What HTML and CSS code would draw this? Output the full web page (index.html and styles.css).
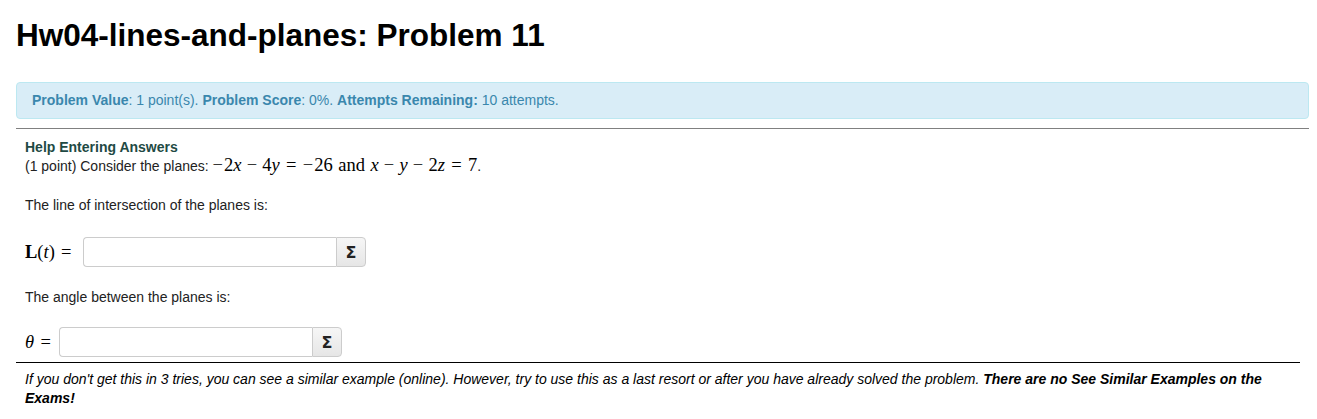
FILE: index.html
```html
<!DOCTYPE html>
<html>
<head>
<meta charset="utf-8">
<link rel="stylesheet" href="styles.css">
</head>
<body>
<div class="page">
  <h1 class="title">Hw04-lines-and-planes: Problem 11</h1>
  <div class="info">
    <b>Problem Value</b>: 1 point(s). <b>Problem Score</b>: 0%. <b>Attempts Remaining:</b> 10 attempts.
  </div>
  <hr class="sep">
  <div class="problem">
    <div class="help">Help Entering Answers</div>
    <div class="line">(1 point) Consider the planes: <span class="math"><span class="mo">−</span>2<i>x</i><span class="mb">−</span>4<i>y</i><span class="mr">=</span><span class="mo">−</span>26<span class="mt">and</span><i>x</i><span class="mb">−</span><i>y</i><span class="mb">−</span>2<i>z</i><span class="mr">=</span>7</span>.</div>
    <div class="para">The line of intersection of the planes is:</div>
    <div class="answer a1">
      <span class="math lbl"><b>L</b>(<i>t</i>)<span class="mr">=</span></span>
      <span class="field"><span class="input"></span><span class="btn">Σ</span></span>
    </div>
    <div class="para p2">The angle between the planes is:</div>
    <div class="answer a2">
      <span class="math lbl"><i>θ</i><span class="mr">=</span></span>
      <span class="field"><span class="input"></span><span class="btn">Σ</span></span>
    </div>
  </div>
  <hr class="sep2">
  <div class="note">If you don't get this in 3 tries, you can see a similar example (online). However, try to use this as a last resort or after you have already solved the problem. <b>There are no See Similar Examples on the Exams!</b></div>
</div>
</body>
</html>
```
FILE: styles.css
```css
html, body {
  margin: 0;
  padding: 0;
  background: #fff;
}
body {
  font-family: "Liberation Sans", Arial, sans-serif;
  font-size: 14px;
  color: #222;
}
.page {
  padding: 0 8px 0 16px;
}
.title {
  margin: 0;
  padding-top: 16px;
  font-size: 31.5px;
  line-height: 38px;
  font-weight: bold;
  color: #000;
}
.info {
  margin-top: 28px;
  width: 1261px;
  background: #d9edf7;
  border: 1px solid #bce8f1;
  border-radius: 4px;
  color: #3a87ad;
  padding: 10px 15px;
  line-height: 15px;
}
.info b { font-weight: bold; }
.sep {
  margin: 9px 0 0 0;
  width: 1293px;
  border: 0;
  border-top: 1px solid #808080;
  height: 0;
}
.problem {
  padding: 9px 0 0 9px;
}
.help {
  font-weight: bold;
  color: #1f4a44;
  line-height: 18px;
}
.line, .para {
  line-height: 18px;
  height: 18px;
  color: #222;
  white-space: nowrap;
}
.para {
  margin-top: 22px;
}
.para.p2 {
  margin-top: 21px;
}
.math {
  font-family: "Liberation Serif", "Times New Roman", serif;
  font-size: 18.5px;
  line-height: 1;
  color: #000;
}
.math i { font-style: italic; }
.mo { margin-right: 1px; }
.mb { margin: 0 0.28em; }
.mr { margin: 0 0.34em; }
.mt { margin: 0 0.3em; }
.answer {
  display: flex;
  align-items: center;
  margin-top: 23px;
  height: 30px;
}
.answer.a2 { margin-top: 21px; }
.lbl {
  white-space: nowrap;
  margin-right: 6px;
}
.a1 .lbl { width: 52px; }
.a2 .lbl { width: 28px; }
.lbl b { font-weight: bold; }
.lbl .mr { margin-right: 0; }
.field {
  display: flex;
  height: 30px;
}
.input {
  width: 253px;
  height: 30px;
  box-sizing: border-box;
  border: 1px solid #ccc;
  border-right: 0;
  border-radius: 4px 0 0 4px;
  background: #fff;
}
.btn {
  width: 30px;
  height: 30px;
  box-sizing: border-box;
  border: 1px solid #ccc;
  border-radius: 0 4px 4px 0;
  background: linear-gradient(#f6f6f6, #e6e6e6);
  display: flex;
  align-items: center;
  justify-content: center;
  font-family: "DejaVu Sans", sans-serif;
  font-weight: bold;
  font-size: 16px;
  color: #222;
}
.sep2 {
  margin: 5px 0 0 0;
  width: 1284px;
  border: 0;
  border-top: 1px solid #000;
  height: 0;
}
.note {
  padding: 7px 0 0 9px;
  width: 1262px;
  font-style: italic;
  line-height: 19px;
  color: #000;
}
.note b { font-weight: bold; }
```
